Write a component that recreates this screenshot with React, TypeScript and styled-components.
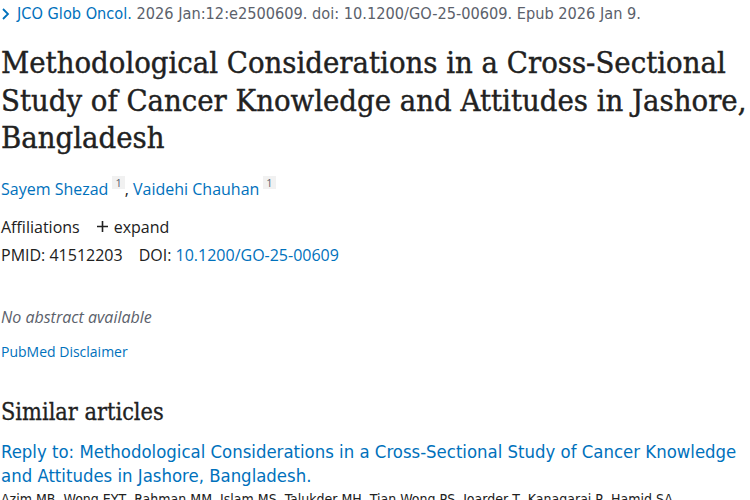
import React from "react";
import styled, { createGlobalStyle } from "styled-components";

const Global = createGlobalStyle`
  html, body { margin: 0; padding: 0; background: #fff; }
  body { font-family: "Open Sans", "Noto Sans", sans-serif; color: #212121; overflow: hidden; }
`;

const Page = styled.main`
  width: 750px;
  height: 500px;
  overflow: hidden;
  padding: 0 0 0 1px;
  box-sizing: border-box;
`;

const Citation = styled.div`
  display: flex;
  align-items: center;
  gap: 6px;
  height: 27px;
  font-family: "Liberation Sans Narrow", "DejaVu Sans Condensed", sans-serif;
  font-size: 16.2px;
  color: #5b616b;
  white-space: nowrap;
`;

const Link = styled.a`
  color: #0071bc;
  text-decoration: none;
`;

const Title = styled.h1`
  margin: 17px 0 0;
  font-family: "DejaVu Serif Condensed", "Liberation Serif", serif;
  font-weight: 400;
  font-size: 30.7px;
  line-height: 37.5px;
  color: #212121;
  -webkit-text-stroke: 0.4px #212121;
`;

const Authors = styled.div`
  margin-top: 19px;
  font-size: 16px;
  line-height: 24px;
`;

const Sup = styled.sup`
  display: inline-block;
  background: #f1f1f1;
  color: #5b616b;
  font-size: 11px;
  line-height: 13px;
  padding: 0 3px;
  margin-left: 4px;
  vertical-align: 8px;
`;

const Line = styled.div<{ $mt?: number }>`
  margin-top: ${(p) => p.$mt ?? 0}px;
  font-size: 16px;
  line-height: 24px;
  display: flex;
  align-items: center;
  gap: 16px;
`;

const Expand = styled.span`
  display: inline-flex;
  align-items: center;
  gap: 5px;
`;

const Muted = styled.p`
  margin: 38px 0 0;
  font-style: italic;
  font-size: 16px;
  line-height: 24px;
  color: #5b616b;
`;

const Disclaimer = styled.a`
  display: block;
  margin-top: 11px;
  font-size: 14px;
  line-height: 24px;
  color: #0071bc;
  text-decoration: none;
`;

const Heading = styled.h2`
  margin: 35px 0 0;
  font-family: "DejaVu Serif Condensed", "Liberation Serif", serif;
  font-weight: 400;
  font-size: 23.3px;
  line-height: 26px;
  -webkit-text-stroke: 0.3px #212121;
`;

const ArticleTitle = styled.a`
  display: block;
  margin-top: 15px;
  font-family: "Liberation Sans Narrow", "DejaVu Sans Condensed", sans-serif;
  font-size: 18.4px;
  line-height: 24px;
  color: #0071bc;
  text-decoration: none;
`;

const ArticleAuthors = styled.div`
  margin-top: 1px;
  font-family: "Liberation Sans Narrow", "DejaVu Sans Condensed", sans-serif;
  font-size: 14px;
  line-height: 20px;
  color: #212121;
  white-space: nowrap;
`;

const Chevron = () => (
  <svg width="10" height="14" viewBox="0 0 10 14" fill="none">
    <path d="M2 2l5 5-5 5" stroke="#0071bc" strokeWidth="1.8" />
  </svg>
);

const Plus = () => (
  <svg width="13" height="13" viewBox="0 0 13 13">
    <path d="M6.5 1v11M1 6.5h11" stroke="#212121" strokeWidth="1.6" />
  </svg>
);

export default function App() {
  return (
    <>
      <Global />
      <Page>
        <Citation>
          <Chevron />
          <span>
            <Link href="#">JCO Glob Oncol.</Link> 2026 Jan:12:e2500609. doi:
            10.1200/GO-25-00609. Epub 2026 Jan 9.
          </span>
        </Citation>
        <Title>
          Methodological Considerations in a Cross-Sectional Study of Cancer
          Knowledge and Attitudes in Jashore, Bangladesh
        </Title>
        <Authors>
          <Link href="#">Sayem Shezad</Link>
          <Sup>1</Sup>, <Link href="#">Vaidehi Chauhan</Link>
          <Sup>1</Sup>
        </Authors>
        <Line $mt={14}>
          <span>Affiliations</span>
          <Expand>
            <Plus />
            expand
          </Expand>
        </Line>
        <Line $mt={4}>
          <span>PMID: 41512203</span>
          <span>
            DOI: <Link href="#">10.1200/GO-25-00609</Link>
          </span>
        </Line>
        <Muted>No abstract available</Muted>
        <Disclaimer href="#">PubMed Disclaimer</Disclaimer>
        <Heading>Similar articles</Heading>
        <ArticleTitle href="#">
          Reply to: Methodological Considerations in a Cross-Sectional Study of
          Cancer Knowledge and Attitudes in Jashore, Bangladesh.
        </ArticleTitle>
        <ArticleAuthors>
          Azim MB, Wong EYT, Rahman MM, Islam MS, Talukder MH, Tian Wong PS,
          Joarder T, Kanagaraj P, Hamid SA.
        </ArticleAuthors>
      </Page>
    </>
  );
}
